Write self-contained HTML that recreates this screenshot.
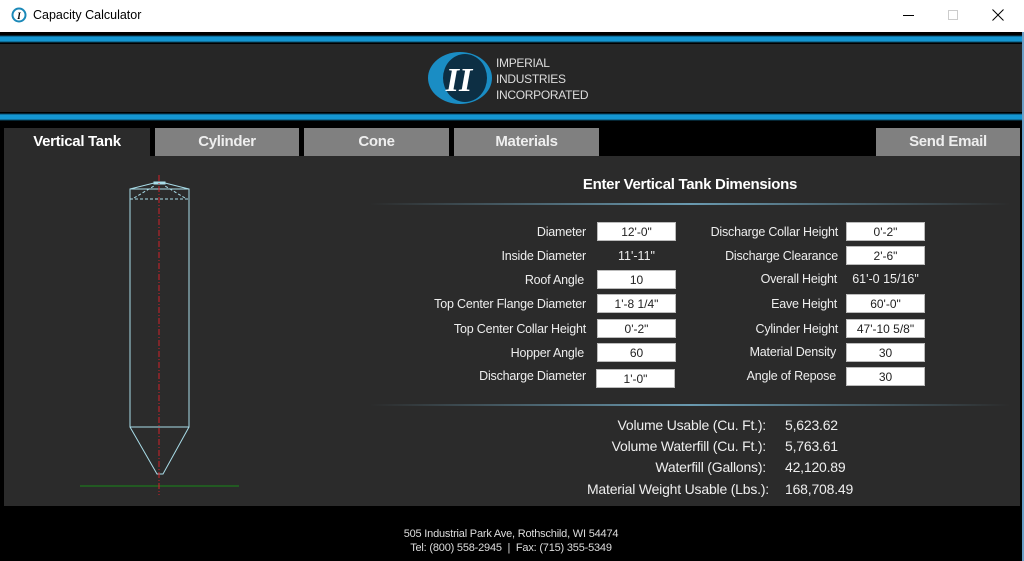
<!DOCTYPE html>
<html><head><style>
*{margin:0;padding:0;box-sizing:border-box}
body{width:1024px;height:561px;overflow:hidden;background:#000;font-family:"Liberation Sans",sans-serif;position:relative}
.abs{position:absolute}
.tb{left:0;top:0;width:1024px;height:32px;background:#fff}
.tab{position:absolute;top:128px;height:28px;background:#808080;color:#eee;font-weight:bold;font-size:15px;text-align:center;line-height:28px;letter-spacing:-0.3px}
.lbl{position:absolute;color:#eee;font-size:12.5px;text-align:right;width:260px;letter-spacing:-0.2px}
.inp{position:absolute;background:#fff;border:1px solid #bbb;width:79px;height:19px;font-size:12px;text-align:center;line-height:18px;color:#222}
.val{position:absolute;color:#eee;font-size:12.5px;text-align:center;width:79px}
.res{position:absolute;color:#eee;font-size:14px;letter-spacing:-0.2px}
.bar{position:absolute;left:0;width:1022px;height:8px;background:linear-gradient(#000,#1496d2 25%,#1496d2 75%,#000)}
</style></head><body>
<div class="abs tb"></div>
<svg class="abs" style="left:11px;top:7px" width="16" height="16"><circle cx="8" cy="8" r="7.5" fill="#1a88b8"/><circle cx="8" cy="8" r="5.5" fill="#fff"/><text x="8" y="12" font-size="9" font-weight="bold" text-anchor="middle" font-family="Liberation Serif" font-style="italic">I</text></svg>
<div class="abs" style="left:33px;top:8px;font-size:12.5px;color:#000">Capacity Calculator</div>
<div class="abs" style="left:903px;top:15px;width:11px;height:1px;background:#000"></div>
<div class="abs" style="left:948px;top:10px;width:10px;height:10px;border:1px solid #ccc"></div>
<svg class="abs" style="left:992px;top:9px" width="12" height="12"><path d="M0.5 0.5L11.5 11.5M11.5 0.5L0.5 11.5" stroke="#000" stroke-width="1"/></svg>
<div class="bar" style="top:35px"></div>
<div class="abs" style="left:0;top:44px;width:1022px;height:68px;background:#262626"></div>
<div class="bar" style="top:113px"></div>
<svg class="abs" style="left:427px;top:51px" width="66" height="54"><ellipse cx="33" cy="27" rx="32" ry="26" fill="#1a8dc4"/><ellipse cx="38" cy="27" rx="22" ry="24" fill="#0d2f44"/><text x="32" y="40" font-family="Liberation Serif" font-style="italic" font-weight="bold" font-size="34" fill="#fff" text-anchor="middle">II</text></svg>
<div class="abs" style="left:496px;top:55px;color:#ddd;font-size:12px;line-height:16px;letter-spacing:-0.3px">IMPERIAL<br>INDUSTRIES<br>INCORPORATED</div>
<div class="abs" style="left:4px;top:156px;width:1016px;height:350px;background:#2b2b2b"></div>
<div class="tab" style="left:4px;width:146px;background:#2b2b2b;color:#fff">Vertical Tank</div>
<div class="tab" style="left:155px;width:144px">Cylinder</div>
<div class="tab" style="left:304px;width:145px">Cone</div>
<div class="tab" style="left:454px;width:145px">Materials</div>
<div class="tab" style="left:876px;width:144px">Send Email</div>
<svg class="abs" style="left:60px;top:170px" width="200" height="330">
<g stroke="#a8dce8" fill="none" stroke-width="1">
<rect x="70" y="19" width="59" height="238"/>
<path d="M70 19 L94 13 L105 13 L129 19"/>
<rect x="94" y="12" width="11" height="2" fill="#a8dce8"/>
<path d="M70 29 L129 29" stroke-dasharray="3 2"/>
<path d="M74 28 L94 16 M125 28 L105 16" stroke-dasharray="3 2"/>
<path d="M70 257 L97 304 L103 304 L129 257"/>
</g>
<line x1="20" y1="316" x2="179" y2="316" stroke="#1a8a1a"/>
<line x1="99" y1="5" x2="99" y2="325" stroke="#d0202a" stroke-dasharray="6 2 1 2"/>
</svg>
<div class="abs" style="left:370px;top:176px;width:640px;text-align:center;color:#fff;font-weight:bold;font-size:15px;letter-spacing:-0.3px">Enter Vertical Tank Dimensions</div>
<div class="abs" style="left:370px;top:203px;width:640px;height:2px;background:linear-gradient(90deg,#2b2b2b,#6a9ab0,#2b2b2b)"></div>
<div class="abs" style="left:370px;top:404px;width:640px;height:2px;background:linear-gradient(90deg,#2b2b2b,#6a9ab0,#2b2b2b)"></div>
<div class="lbl" style="left:326px;top:225px">Diameter</div><div class="inp" style="left:597px;top:222px">12'-0"</div>
<div class="lbl" style="left:326px;top:249px">Inside Diameter</div><div class="val" style="left:597px;top:249px">11'-11"</div>
<div class="lbl" style="left:324px;top:273px">Roof Angle</div><div class="inp" style="left:597px;top:270px">10</div>
<div class="lbl" style="left:326px;top:297px">Top Center Flange Diameter</div><div class="inp" style="left:597px;top:294px">1'-8 1/4"</div>
<div class="lbl" style="left:326px;top:322px">Top Center Collar Height</div><div class="inp" style="left:597px;top:319px">0'-2"</div>
<div class="lbl" style="left:324px;top:346px">Hopper Angle</div><div class="inp" style="left:597px;top:343px">60</div>
<div class="lbl" style="left:326px;top:369px">Discharge Diameter</div><div class="inp" style="left:596px;top:369px">1'-0"</div>
<div class="lbl" style="left:578px;top:225px">Discharge Collar Height</div><div class="inp" style="left:846px;top:222px">0'-2"</div>
<div class="lbl" style="left:578px;top:249px">Discharge Clearance</div><div class="inp" style="left:846px;top:246px">2'-6"</div>
<div class="lbl" style="left:577px;top:272px">Overall Height</div><div class="val" style="left:846px;top:272px">61'-0 15/16"</div>
<div class="lbl" style="left:577px;top:297px">Eave Height</div><div class="inp" style="left:846px;top:294px">60'-0"</div>
<div class="lbl" style="left:578px;top:322px">Cylinder Height</div><div class="inp" style="left:846px;top:319px">47'-10 5/8"</div>
<div class="lbl" style="left:576px;top:345px">Material Density</div><div class="inp" style="left:846px;top:343px">30</div>
<div class="lbl" style="left:576px;top:369px">Angle of Repose</div><div class="inp" style="left:846px;top:367px">30</div>
<div class="res" style="left:460px;top:417px;width:306px;text-align:right">Volume Usable (Cu. Ft.):</div><div class="res" style="left:785px;top:417px">5,623.62</div>
<div class="res" style="left:460px;top:438px;width:306px;text-align:right">Volume Waterfill (Cu. Ft.):</div><div class="res" style="left:785px;top:438px">5,763.61</div>
<div class="res" style="left:460px;top:459px;width:306px;text-align:right">Waterfill (Gallons):</div><div class="res" style="left:785px;top:459px">42,120.89</div>
<div class="res" style="left:460px;top:481px;width:309px;text-align:right">Material Weight Usable (Lbs.):</div><div class="res" style="left:785px;top:481px">168,708.49</div>
<div class="abs" style="left:380px;top:527px;width:262px;text-align:center;color:#ddd;font-size:11px;line-height:14px;letter-spacing:-0.2px">505 Industrial Park Ave, Rothschild, WI 54474<br>Tel: (800) 558-2945 &nbsp;|&nbsp; Fax: (715) 355-5349</div>
<div class="abs" style="left:1022px;top:32px;width:2px;height:529px;background:#6aa0c8"></div>
</body></html>
